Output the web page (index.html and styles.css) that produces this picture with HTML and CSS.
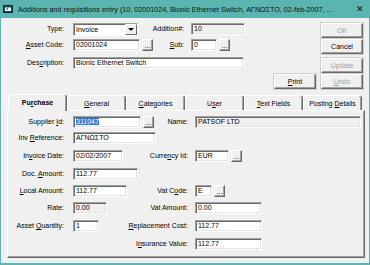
FILE: index.html
```html
<!DOCTYPE html>
<html lang="en">
<head>
<meta charset="UTF-8">
<title>Additions and requisitions entry</title>
<link rel="stylesheet" href="styles.css">
</head>
<body>

<div class="window">
  <div class="titlebar">
    <svg class="app-icon" width="10" height="10" viewBox="0 0 10 10">
      <rect x="0.5" y="1.5" width="9" height="7" fill="#1f4f5a" stroke="#123"/>
      <rect x="2" y="3.5" width="6" height="3.5" fill="#e8f4f4"/>
      <path d="M3 5 l2 -1 l0 2 z" fill="#1f4f5a"/>
    </svg>
    <span class="title">Additions and requisitions entry (10, 02001024, Bionic Ethernet Switch, ΑΓΝΩΣΤΟ, 02-feb-2007, ...</span>
    <span class="close">✕</span>
  </div>

  <div class="content">
    <div class="top">
      <div class="fields">
        <div class="row h16">
          <span class="lbl">Type:</span>
          <div class="select">Invoice<span class="drop"><i></i></span></div>
          <span class="lbl2">Addition#:</span>
          <div class="col2"><div class="field ro w54">10</div></div>
        </div>
        <div class="row h18">
          <span class="lbl"><u>A</u>sset Code:</span>
          <div class="field w67">02001024</div><span class="dots">...</span>
          <span class="lbl2"><u>S</u>ub:</span>
          <div class="col2"><div class="field w26">0</div><span class="dots">...</span></div>
        </div>
        <div class="row h18">
          <span class="lbl">Des<u>c</u>ription:</span>
          <div class="field w171">Bionic Ethernet Switch</div>
        </div>
      </div>
      <div class="print-col">
        <button class="btn"><u>P</u>rint</button>
      </div>
      <div class="buttons">
        <button class="btn off">OK</button>
        <button class="btn">Cancel</button>
        <button class="btn off gap">Update</button>
        <button class="btn off"><u>U</u>ndo</button>
      </div>
    </div>

    <div class="tabs">
      <div class="tab active">Pu<u>r</u>chase</div>
      <div class="tab"><u>G</u>eneral</div>
      <div class="tab"><u>C</u>ategories</div>
      <div class="tab">U<u>s</u>er</div>
      <div class="tab"><u>T</u>ext Fields</div>
      <div class="tab">Posting <u>D</u>etails</div>
    </div>

    <div class="panel">
      <div class="prow h16">
        <span class="lbl">Supplier <u>I</u>d:</span>
        <div class="field w68"><span class="sel">311047</span></div><span class="dots">...</span>
        <span class="lbl2">Name:</span>
        <div class="col2"><div class="field ro w166">PATSOF LTD</div></div>
      </div>
      <div class="prow h18">
        <span class="lbl">Inv <u>R</u>eference:</span>
        <div class="field w83">ΑΓΝΩΣΤΟ</div>
      </div>
      <div class="prow h18">
        <span class="lbl">In<u>v</u>oice Date:</span>
        <div class="field w50">02/02/2007</div>
        <span class="lbl2">Curre<u>n</u>cy Id:</span>
        <div class="col2"><div class="field w34">EUR</div><span class="dots">...</span></div>
      </div>
      <div class="prow h17">
        <span class="lbl">Doc. <u>A</u>mount:</span>
        <div class="field w65">112.77</div>
      </div>
      <div class="prow h17">
        <span class="lbl"><u>L</u>ocal Amount:</span>
        <div class="field w54">112.77</div>
        <span class="lbl2">Vat C<u>o</u>de:</span>
        <div class="col2"><div class="field w17">E</div><span class="dots">...</span></div>
      </div>
      <div class="prow h18">
        <span class="lbl">Rate:</span>
        <div class="field ro w34">0.00</div>
        <span class="lbl2">Vat Amount:</span>
        <div class="col2"><div class="field w67">0.00</div></div>
      </div>
      <div class="prow h18">
        <span class="lbl">Asset <u>Q</u>uantity:</span>
        <div class="field w26">1</div>
        <span class="lbl2"><u>R</u>eplacement Cost:</span>
        <div class="col2"><div class="field w67">112.77</div></div>
      </div>
      <div class="prow h18">
        <span class="lbl2">I<u>n</u>surance Value:</span>
        <div class="col2"><div class="field w67">112.77</div></div>
      </div>
    </div>
  </div>
</div>

</body>
</html>
```

FILE: styles.css
```css
body {
  margin: 0;
  font-family: "Liberation Sans", Arial, sans-serif;
  font-size: 7px;
  color: #000000;
}

.window {
  width: 370px;
  height: 265px;
  box-sizing: border-box;
  background-color: #f0f0f0;
  border-left: 1px solid #5ab4b0;
  border-right: 1px solid #5ab4b0;
  border-bottom: 2px solid #5ab4b0;
}

/* title bar */
.titlebar {
  height: 18px;
  margin: 0 -1px;
  background-color: #5ab4b0;
  display: flex;
  align-items: center;
  padding: 0 6px 0 3px;
  box-sizing: border-box;
}

.app-icon {
  flex: none;
  margin-right: 5px;
}

.title {
  flex: 1;
  font-size: 7.2px;
  color: #111111;
  white-space: nowrap;
  overflow: hidden;
}

.close {
  font-size: 9px;
  color: #111111;
  margin-left: 6px;
}

/* top section */
.top {
  display: flex;
  height: 74px;
}

.fields {
  width: 244px;
  padding-top: 5px;
}

.row, .prow {
  display: flex;
  align-items: flex-start;
}

.h16 { height: 16px; }
.h17 { height: 17px; }
.h18 { height: 18px; }

.lbl {
  width: 63px;
  margin-right: 9px;
  text-align: right;
  white-space: nowrap;
  line-height: 12px;
}

.lbl2 {
  flex: 1;
  text-align: right;
  white-space: nowrap;
  margin-right: 7px;
  line-height: 12px;
}

.col2 {
  width: 54px;
  display: flex;
}

/* inputs */
.field {
  height: 12px;
  box-sizing: border-box;
  background-color: #ffffff;
  border-top: 1px solid #a0a0a0;
  border-left: 1px solid #a0a0a0;
  border-right: 1px solid #ffffff;
  border-bottom: 1px solid #ffffff;
  box-shadow: inset 1px 1px 0 #696969, inset -1px -1px 0 #e3e3e3;
  padding: 0 2px;
  line-height: 10px;
  white-space: nowrap;
  overflow: hidden;
}

.field.ro {
  background-color: #f0f0f0;
}

.sel {
  background-color: #3178d6;
  color: #ffffff;
}

.w17 { width: 17px; }
.w26 { width: 26px; }
.w34 { width: 34px; }
.w50 { width: 50px; }
.w54 { width: 54px; }
.w65 { width: 65px; }
.w67 { width: 67px; }
.w68 { width: 68px; }
.w83 { width: 83px; }
.w166 { width: 166px; }
.w171 { width: 171px; }

.dots {
  width: 11px;
  height: 12px;
  margin-left: 2px;
  box-sizing: border-box;
  border-top: 1px solid #ffffff;
  border-left: 1px solid #ffffff;
  border-right: 1px solid #696969;
  border-bottom: 1px solid #696969;
  box-shadow: inset -1px -1px 0 #a0a0a0;
  background-color: #f0f0f0;
  font-size: 7px;
  line-height: 12px;
  text-align: center;
  color: #000000;
}

.select {
  width: 65px;
  height: 13px;
  box-sizing: border-box;
  display: flex;
  justify-content: space-between;
  background-color: #ffffff;
  border-top: 1px solid #a0a0a0;
  border-left: 1px solid #a0a0a0;
  border-right: 1px solid #ffffff;
  border-bottom: 1px solid #ffffff;
  box-shadow: inset 1px 1px 0 #696969;
  padding-left: 2px;
  line-height: 11px;
}

.drop {
  width: 12px;
  height: 11px;
  box-sizing: border-box;
  background-color: #f0f0f0;
  border-top: 1px solid #ffffff;
  border-left: 1px solid #ffffff;
  border-right: 1px solid #696969;
  border-bottom: 1px solid #696969;
  display: flex;
  align-items: center;
  justify-content: center;
}

.drop i {
  border-left: 3px solid transparent;
  border-right: 3px solid transparent;
  border-top: 3px solid #000000;
}

/* buttons */
.btn {
  display: block;
  width: 42px;
  height: 15px;
  padding: 0;
  font-family: "Liberation Sans", Arial, sans-serif;
  font-size: 7px;
  color: #000000;
  background-color: #f0f0f0;
  border-top: 1px solid #ffffff;
  border-left: 1px solid #ffffff;
  border-right: 1px solid #696969;
  border-bottom: 1px solid #696969;
  box-shadow: inset -1px -1px 0 #a0a0a0, 0 0 0 1px #d0d0d0;
}

.btn.off {
  color: #a0a0a0;
}

.print-col {
  margin-left: 29px;
  align-self: flex-end;
  margin-bottom: 3px;
}

.buttons {
  margin-left: 5px;
  padding-top: 5px;
  display: flex;
  flex-direction: column;
  gap: 1px;
}

.buttons .gap {
  margin-top: 3px;
}

/* tabs */
.tabs {
  display: flex;
  align-items: flex-end;
  height: 18px;
  margin-left: 7px;
}

.tab {
  width: 59px;
  height: 15px;
  box-sizing: border-box;
  border-top: 1px solid #ffffff;
  border-left: 1px solid #ffffff;
  border-right: 1px solid #696969;
  border-radius: 3px 3px 0 0;
  box-shadow: inset -1px 0 0 #a0a0a0;
  text-align: center;
  line-height: 15px;
  white-space: nowrap;
}

.tab.active {
  height: 17px;
  font-weight: bold;
  position: relative;
  background-color: #f0f0f0;
  margin-bottom: -1px;
  z-index: 1;
}

/* tab page */
.panel {
  width: 358px;
  height: 148px;
  margin-left: 6px;
  box-sizing: border-box;
  border-top: 1px solid #ffffff;
  border-left: 1px solid #ffffff;
  border-right: 1px solid #696969;
  border-bottom: 1px solid #696969;
  box-shadow: inset -1px -1px 0 #a0a0a0;
  padding: 5px 0 0 0;
}

.panel .lbl {
  width: 56px;
}

.panel .col2 {
  width: 169px;
}
```
